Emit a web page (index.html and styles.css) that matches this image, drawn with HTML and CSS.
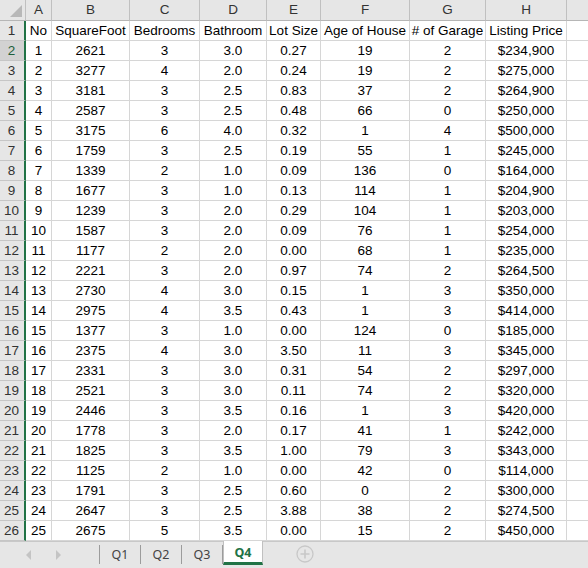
FILE: index.html
```html
<!DOCTYPE html>
<html>
<head>
<meta charset="utf-8">
<link rel="stylesheet" href="styles.css">
</head>
<body>
<div class="app">
<div class="sheet">
<div class="ch corner"><svg width="12" height="12" viewBox="0 0 12 12"><polygon points="12,0 12,12 0,12" fill="#b8b8b8"/></svg></div>
<div class="ch">A</div><div class="ch">B</div><div class="ch">C</div><div class="ch">D</div><div class="ch">E</div><div class="ch">F</div><div class="ch">G</div><div class="ch">H</div><div class="ch last"></div>

<div class="rh">1</div><div class="c">No</div><div class="c">SquareFoot</div><div class="c">Bedrooms</div><div class="c">Bathroom</div><div class="c">Lot Size</div><div class="c">Age of House</div><div class="c"># of Garage</div><div class="c">Listing Price</div><div class="c"></div>
<div class="rh sel">2</div><div class="c">1</div><div class="c">2621</div><div class="c">3</div><div class="c">3.0</div><div class="c">0.27</div><div class="c">19</div><div class="c">2</div><div class="c">$234,900</div><div class="c"></div>
<div class="rh">3</div><div class="c">2</div><div class="c">3277</div><div class="c">4</div><div class="c">2.0</div><div class="c">0.24</div><div class="c">19</div><div class="c">2</div><div class="c">$275,000</div><div class="c"></div>
<div class="rh">4</div><div class="c">3</div><div class="c">3181</div><div class="c">3</div><div class="c">2.5</div><div class="c">0.83</div><div class="c">37</div><div class="c">2</div><div class="c">$264,900</div><div class="c"></div>
<div class="rh">5</div><div class="c">4</div><div class="c">2587</div><div class="c">3</div><div class="c">2.5</div><div class="c">0.48</div><div class="c">66</div><div class="c">0</div><div class="c">$250,000</div><div class="c"></div>
<div class="rh">6</div><div class="c">5</div><div class="c">3175</div><div class="c">6</div><div class="c">4.0</div><div class="c">0.32</div><div class="c">1</div><div class="c">4</div><div class="c">$500,000</div><div class="c"></div>
<div class="rh">7</div><div class="c">6</div><div class="c">1759</div><div class="c">3</div><div class="c">2.5</div><div class="c">0.19</div><div class="c">55</div><div class="c">1</div><div class="c">$245,000</div><div class="c"></div>
<div class="rh">8</div><div class="c">7</div><div class="c">1339</div><div class="c">2</div><div class="c">1.0</div><div class="c">0.09</div><div class="c">136</div><div class="c">0</div><div class="c">$164,000</div><div class="c"></div>
<div class="rh">9</div><div class="c">8</div><div class="c">1677</div><div class="c">3</div><div class="c">1.0</div><div class="c">0.13</div><div class="c">114</div><div class="c">1</div><div class="c">$204,900</div><div class="c"></div>
<div class="rh">10</div><div class="c">9</div><div class="c">1239</div><div class="c">3</div><div class="c">2.0</div><div class="c">0.29</div><div class="c">104</div><div class="c">1</div><div class="c">$203,000</div><div class="c"></div>
<div class="rh">11</div><div class="c">10</div><div class="c">1587</div><div class="c">3</div><div class="c">2.0</div><div class="c">0.09</div><div class="c">76</div><div class="c">1</div><div class="c">$254,000</div><div class="c"></div>
<div class="rh">12</div><div class="c">11</div><div class="c">1177</div><div class="c">2</div><div class="c">2.0</div><div class="c">0.00</div><div class="c">68</div><div class="c">1</div><div class="c">$235,000</div><div class="c"></div>
<div class="rh">13</div><div class="c">12</div><div class="c">2221</div><div class="c">3</div><div class="c">2.0</div><div class="c">0.97</div><div class="c">74</div><div class="c">2</div><div class="c">$264,500</div><div class="c"></div>
<div class="rh">14</div><div class="c">13</div><div class="c">2730</div><div class="c">4</div><div class="c">3.0</div><div class="c">0.15</div><div class="c">1</div><div class="c">3</div><div class="c">$350,000</div><div class="c"></div>
<div class="rh">15</div><div class="c">14</div><div class="c">2975</div><div class="c">4</div><div class="c">3.5</div><div class="c">0.43</div><div class="c">1</div><div class="c">3</div><div class="c">$414,000</div><div class="c"></div>
<div class="rh">16</div><div class="c">15</div><div class="c">1377</div><div class="c">3</div><div class="c">1.0</div><div class="c">0.00</div><div class="c">124</div><div class="c">0</div><div class="c">$185,000</div><div class="c"></div>
<div class="rh">17</div><div class="c">16</div><div class="c">2375</div><div class="c">4</div><div class="c">3.0</div><div class="c">3.50</div><div class="c">11</div><div class="c">3</div><div class="c">$345,000</div><div class="c"></div>
<div class="rh">18</div><div class="c">17</div><div class="c">2331</div><div class="c">3</div><div class="c">3.0</div><div class="c">0.31</div><div class="c">54</div><div class="c">2</div><div class="c">$297,000</div><div class="c"></div>
<div class="rh">19</div><div class="c">18</div><div class="c">2521</div><div class="c">3</div><div class="c">3.0</div><div class="c">0.11</div><div class="c">74</div><div class="c">2</div><div class="c">$320,000</div><div class="c"></div>
<div class="rh">20</div><div class="c">19</div><div class="c">2446</div><div class="c">3</div><div class="c">3.5</div><div class="c">0.16</div><div class="c">1</div><div class="c">3</div><div class="c">$420,000</div><div class="c"></div>
<div class="rh">21</div><div class="c">20</div><div class="c">1778</div><div class="c">3</div><div class="c">2.0</div><div class="c">0.17</div><div class="c">41</div><div class="c">1</div><div class="c">$242,000</div><div class="c"></div>
<div class="rh">22</div><div class="c">21</div><div class="c">1825</div><div class="c">3</div><div class="c">3.5</div><div class="c">1.00</div><div class="c">79</div><div class="c">3</div><div class="c">$343,000</div><div class="c"></div>
<div class="rh">23</div><div class="c">22</div><div class="c">1125</div><div class="c">2</div><div class="c">1.0</div><div class="c">0.00</div><div class="c">42</div><div class="c">0</div><div class="c">$114,000</div><div class="c"></div>
<div class="rh">24</div><div class="c">23</div><div class="c">1791</div><div class="c">3</div><div class="c">2.5</div><div class="c">0.60</div><div class="c">0</div><div class="c">2</div><div class="c">$300,000</div><div class="c"></div>
<div class="rh">25</div><div class="c">24</div><div class="c">2647</div><div class="c">3</div><div class="c">2.5</div><div class="c">3.88</div><div class="c">38</div><div class="c">2</div><div class="c">$274,500</div><div class="c"></div>
<div class="rh">26</div><div class="c">25</div><div class="c">2675</div><div class="c">5</div><div class="c">3.5</div><div class="c">0.00</div><div class="c">15</div><div class="c">2</div><div class="c">$450,000</div><div class="c"></div>
</div>

<div class="tabbar">
  <div class="nav">
    <svg class="arrow" width="6" height="10" viewBox="0 0 6 10"><polygon points="5,0 5,10 0,5" fill="#c4c4c4"/></svg>
    <svg class="arrow" width="6" height="10" viewBox="0 0 6 10"><polygon points="1,0 1,10 6,5" fill="#c4c4c4"/></svg>
  </div>
  <div class="tab">Q1</div>
  <div class="tab">Q2</div>
  <div class="tab">Q3</div>
  <div class="tab active">Q4</div>
  <div class="add">
    <svg width="18" height="18" viewBox="0 0 18 18"><circle cx="9" cy="9" r="8" fill="none" stroke="#c8c8c8" stroke-width="1.3"/><path d="M9 4.5V13.5M4.5 9H13.5" stroke="#c8c8c8" stroke-width="1.6"/></svg>
  </div>
</div>
</div>
</body>
</html>
```

FILE: styles.css
```css
html, body {
  margin: 0;
  padding: 0;
  background: #ffffff;
}

.app {
  width: 588px;
  height: 568px;
  overflow: hidden;
  display: flex;
  flex-direction: column;
}

.sheet {
  display: grid;
  grid-template-columns: 26px 26px 78px 70px 67px 54px 89px 76px 81px 22px;
  grid-template-rows: 21px;
  grid-auto-rows: 20px;
  font-family: "Liberation Sans", Arial, sans-serif;
  font-size: 13.5px;
  color: #000;
}

.sheet > div {
  box-sizing: border-box;
  border-right: 1px solid #d6d6d6;
  border-bottom: 1px solid #d6d6d6;
  text-align: center;
  line-height: 19px;
  white-space: nowrap;
  overflow: hidden;
}

.sheet > .ch {
  background: #e6e6e6;
  color: #333;
  border-right-color: #c0c0c0;
  border-bottom-color: #b6b6b6;
  line-height: 20px;
}

.sheet > .corner {
  display: flex;
  align-items: flex-end;
  justify-content: flex-end;
  padding: 0 3px 3px 0;
}

.corner svg {
  display: block;
}

.sheet > .rh {
  background: #e6e6e6;
  color: #333;
  border-right: 2px solid #217346;
  border-bottom-color: #c6c6c6;
  padding-right: 1px;
}

.sheet > .rh.sel {
  background: #d2d2d2;
  color: #1e5f3b;
}

.tabbar {
  flex: 1;
  display: flex;
  align-items: stretch;
  background: #e6e6e6;
  border-top: 1px solid #c8c8c8;
  font-family: "Noto Sans", "Open Sans", sans-serif;
  font-size: 12.5px;
  color: #444;
  padding-bottom: 3px;
}

.nav {
  width: 100px;
  box-sizing: border-box;
  display: flex;
  align-items: center;
  padding-left: 26px;
  gap: 23px;
  border-right: 1px solid #9c9c9c;
  margin: 3px 0 1px 0;
}

.arrow {
  display: block;
}

.tab {
  width: 40px;
  display: flex;
  align-items: center;
  justify-content: center;
  border-right: 1px solid #9c9c9c;
  margin: 3px 0 1px 0;
}

.tab.active {
  margin: -1px 0 0 0;
  width: 40px;
  background: #ffffff;
  color: #217346;
  font-weight: bold;
  border-left: 1px solid #c0c0c0;
  border-right: 1px solid #c0c0c0;
  border-bottom: 3px solid #217346;
  box-sizing: border-box;
  padding-top: 1px;
}

.add {
  display: flex;
  align-items: center;
  margin-left: 33px;
}

.add svg {
  display: block;
}
```
